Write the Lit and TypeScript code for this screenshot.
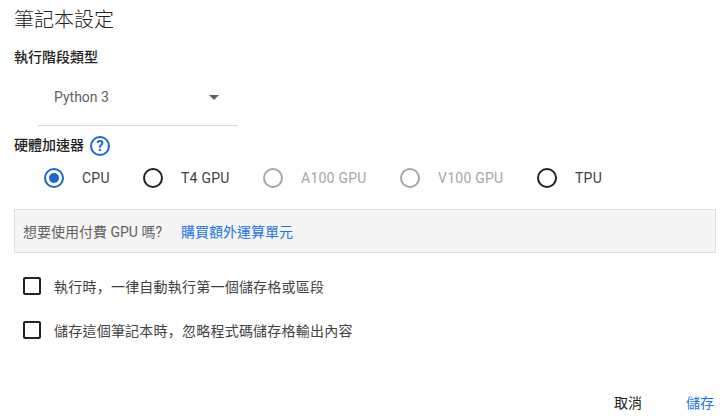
import { LitElement, html, css } from "lit";
import { customElement } from "lit/decorators.js";

const radios = [
  { label: "CPU", checked: true, disabled: false, w: 99 },
  { label: "T4 GPU", checked: false, disabled: false, w: 120 },
  { label: "A100 GPU", checked: false, disabled: true, w: 137 },
  { label: "V100 GPU", checked: false, disabled: true, w: 137 },
  { label: "TPU", checked: false, disabled: false, w: 100 },
];

@customElement("app-root")
export class AppRoot extends LitElement {
  static styles = css`
    :host {
      display: block;
      width: 728px;
      height: 416px;
      overflow: hidden;
      background: #fff;
      color: #212121;
      font-family: Roboto, "Noto Sans CJK TC", sans-serif;
      font-size: 14px;
    }
    .page { display: flex; flex-direction: column; height: 416px; padding: 0 12px 0 14px; box-sizing: border-box; }
    .title { font-size: 20px; line-height: 28px; margin-top: 6px; font-weight: 300; }
    .label { font-size: 14px; font-weight: 500; line-height: 20px; }
    .l1 { margin-top: 13px; }
    .select-wrap { padding-left: 24px; }
    .select { width: 200px; height: 58px; margin-top: 1px; box-sizing: border-box; border-bottom: 1px solid #d9d9d9; padding: 0 19px 0 16px; display: flex; align-items: center; justify-content: space-between; color: #616161; }
    .arrow { width: 0; height: 0; margin-top: 2px; border-left: 5.5px solid transparent; border-right: 5.5px solid transparent; border-top: 5.5px solid #616161; }
    .hw { display: flex; align-items: center; gap: 5px; margin-top: 7px; height: 26px; }
    .hw .label { margin-bottom: 2px; }
    .radios { display: flex; padding-left: 30px; height: 26px; margin-top: 6px; align-items: center; color: #424242; letter-spacing: 0.25px; }
    .radio { display: flex; align-items: center; gap: 18px; }
    .disabled { color: #a6a6a6; }
    .circle { width: 20px; height: 20px; box-sizing: border-box; border: 2px solid #212121; border-radius: 50%; display: flex; align-items: center; justify-content: center; }
    .circle.on { border-color: #1a67d2; }
    .circle.on::after { content: ""; width: 10px; height: 10px; border-radius: 50%; background: #1a67d2; }
    .circle.off { border-color: #a6a6a6; }
    .notice { margin-top: 18px; height: 44px; box-sizing: border-box; border: 1px solid #e0e0e0; background: #f5f5f5; display: flex; align-items: center; padding-left: 8px; gap: 19px; color: #616161; }
    .notice a { color: #1a73e8; text-decoration: none; }
    .checks { display: flex; flex-direction: column; gap: 26px; margin-top: 24px; padding-left: 9px; }
    .check { display: flex; align-items: center; gap: 13px; height: 18px; color: #424242; letter-spacing: 0.22px; }
    .check .text { margin-bottom: 1px; }
    .box { width: 18px; height: 18px; box-sizing: border-box; border: 2px solid #212121; border-radius: 2px; }
    .sc { font-family: "Noto Sans CJK SC", sans-serif; }
    .actions { margin-top: auto; display: flex; justify-content: flex-end; gap: 44px; padding: 0 2px 3px 0; line-height: 20px; }
    .save { color: #1a73e8; }
  `;

  render() {
    return html`<div class="page">
      <div class="title">筆記本設定</div>
      <div class="label l1">執行階段類型</div>
      <div class="select-wrap"><div class="select"><span>Python 3</span><span class="arrow"></span></div></div>
      <div class="hw"><span class="label">硬體加速器</span>
        <svg width="22" height="22" viewBox="0 0 22 22"><circle cx="11" cy="11" r="9" fill="none" stroke="#1a67d2" stroke-width="2"/><text x="11" y="16" text-anchor="middle" font-size="15" font-weight="700" fill="#1a67d2" font-family="Roboto">?</text></svg>
      </div>
      <div class="radios">
        ${radios.map(
          (r) => html`<div class="radio ${r.disabled ? "disabled" : ""}" style="width:${r.w}px">
            <span class="circle ${r.checked ? "on" : ""} ${r.disabled ? "off" : ""}"></span><span>${r.label}</span>
          </div>`
        )}
      </div>
      <div class="notice"><span>想要使用付費 GPU 嗎?</span><a>購買額外運算單元</a></div>
      <div class="checks">
        <div class="check"><span class="box"></span><span class="text">執行時<span class="sc">，</span>一律自動執行第一個儲存格或區段</span></div>
        <div class="check"><span class="box"></span><span class="text">儲存這個筆記本時<span class="sc">，</span>忽略程式碼儲存格輸出內容</span></div>
      </div>
      <div class="actions"><span>取消</span><span class="save">儲存</span></div>
    </div>`;
  }
}
